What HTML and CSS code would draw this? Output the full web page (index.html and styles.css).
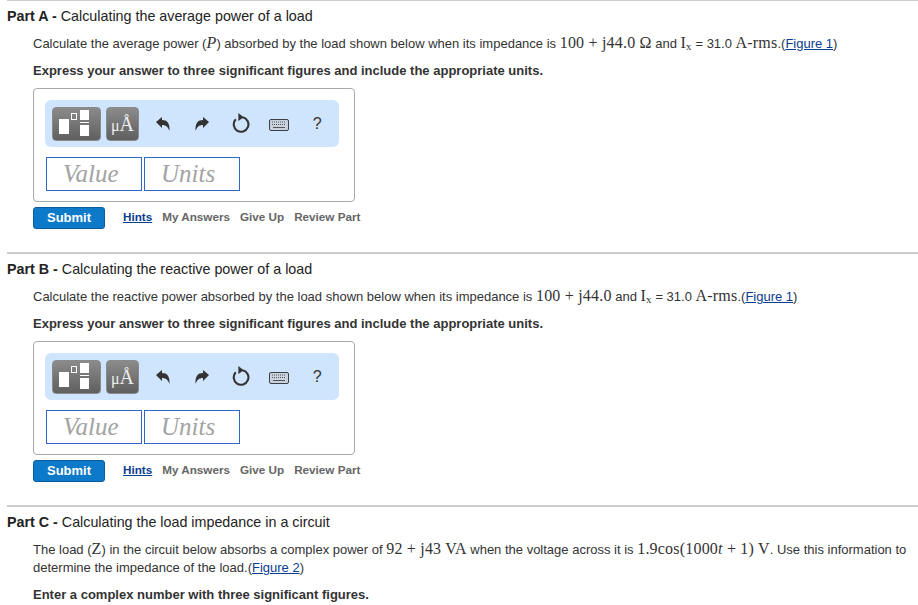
FILE: index.html
```html
<!DOCTYPE html>
<html lang="en">
<head>
    <meta charset="UTF-8">
    <title>Power in a load</title>
    <link rel="stylesheet" href="styles.css">
</head>
<body>
    <svg class="icon-defs" width="0" height="0">
        <symbol id="i-template" viewBox="0 0 49 34">
            <rect x="7" y="12" width="10" height="15" fill="#fff"/>
            <rect x="19.500" y="6.500" width="5" height="6" fill="none" stroke="#fff"/>
            <rect x="28" y="3" width="9" height="10" fill="#fff"/>
            <rect x="28" y="15" width="9" height="1" fill="#fff"/>
            <rect x="28" y="18" width="9" height="11" fill="#fff"/>
        </symbol>
        <symbol id="i-undo" viewBox="0 0 16 16">
            <path d="M1 6 L7 1 V4 C12 4 15 7 14.500 15 C13 11 11 9 7 9 V12 Z" fill="#333"/>
        </symbol>
        <symbol id="i-reset" viewBox="0 0 18 20">
            <path d="M11 4 A7 7 0 1 1 4.500 6" fill="none" stroke="#333" stroke-width="2"/>
            <path d="M7 0 L12 4 L7 7.500 Z" fill="#333"/>
        </symbol>
        <symbol id="i-keyboard" viewBox="0 0 20 12">
            <rect x="0.500" y="0.500" width="19" height="11" rx="1.500" fill="#c9d3df" stroke="#3c3f44"/>
            <path d="M3 3 H17 M3 5.500 H17" stroke="#555" stroke-dasharray="1 1"/>
            <path d="M4 8.500 H16" stroke="#555"/>
        </symbol>
    </svg>

    <section class="part">
        <h2><b>Part A -</b> Calculating the average power of a load</h2>
        <p class="question">Calculate the average power (<i class="math">P</i>) absorbed by the load shown below when its impedance is <span class="math">100 + j44.0 Ω</span> and <span class="math">I<sub>x</sub></span> = 31.0 <span class="math">A-rms</span>.(<a href="#">Figure 1</a>)</p>
        <p class="instruction">Express your answer to three significant figures and include the appropriate units.</p>
        <div class="answer-box">
            <div class="toolbar">
                <button class="tool-btn tool-template"><svg width="49" height="34"><use href="#i-template"/></svg></button>
                <button class="tool-btn tool-units"><span class="mu">μ</span>Å</button>
                <span class="tool-slot first"><svg width="16" height="16"><use href="#i-undo"/></svg></span>
                <span class="tool-slot"><svg class="flip" width="16" height="16"><use href="#i-undo"/></svg></span>
                <span class="tool-slot"><svg width="19" height="21"><use href="#i-reset"/></svg></span>
                <span class="tool-slot keyboard"><svg width="20" height="12"><use href="#i-keyboard"/></svg></span>
                <span class="tool-slot help">?</span>
            </div>
            <div class="inputs">
                <input class="answer-input" placeholder="Value">
                <input class="answer-input" placeholder="Units">
            </div>
        </div>
        <div class="actions">
            <button class="submit">Submit</button>
            <a class="hints" href="#">Hints</a>
            <a class="action" href="#">My Answers</a>
            <a class="action" href="#">Give Up</a>
            <a class="action" href="#">Review Part</a>
        </div>
    </section>

    <section class="part">
        <h2><b>Part B -</b> Calculating the reactive power of a load</h2>
        <p class="question">Calculate the reactive power absorbed by the load shown below when its impedance is <span class="math">100 + j44.0</span> and <span class="math">I<sub>x</sub></span> = 31.0 <span class="math">A-rms</span>.(<a href="#">Figure 1</a>)</p>
        <p class="instruction">Express your answer to three significant figures and include the appropriate units.</p>
        <div class="answer-box">
            <div class="toolbar">
                <button class="tool-btn tool-template"><svg width="49" height="34"><use href="#i-template"/></svg></button>
                <button class="tool-btn tool-units"><span class="mu">μ</span>Å</button>
                <span class="tool-slot first"><svg width="16" height="16"><use href="#i-undo"/></svg></span>
                <span class="tool-slot"><svg class="flip" width="16" height="16"><use href="#i-undo"/></svg></span>
                <span class="tool-slot"><svg width="19" height="21"><use href="#i-reset"/></svg></span>
                <span class="tool-slot keyboard"><svg width="20" height="12"><use href="#i-keyboard"/></svg></span>
                <span class="tool-slot help">?</span>
            </div>
            <div class="inputs">
                <input class="answer-input" placeholder="Value">
                <input class="answer-input" placeholder="Units">
            </div>
        </div>
        <div class="actions">
            <button class="submit">Submit</button>
            <a class="hints" href="#">Hints</a>
            <a class="action" href="#">My Answers</a>
            <a class="action" href="#">Give Up</a>
            <a class="action" href="#">Review Part</a>
        </div>
    </section>

    <section class="part">
        <h2><b>Part C -</b> Calculating the load impedance in a circuit</h2>
        <p class="question">The load (<span class="math">Z</span>) in the circuit below absorbs a complex power of <span class="math">92 + j43 VA</span> when the voltage across it is <span class="math">1.9cos(1000<i>t</i> + 1) V</span>. Use this information to determine the impedance of the load.(<a href="#">Figure 2</a>)</p>
        <p class="instruction">Enter a complex number with three significant figures.</p>
    </section>
</body>
</html>
```

FILE: styles.css
```css
/* Reset */
body, h2, p {
    margin: 0;
    padding: 0;
}

body {
    font-family: "Liberation Sans", Arial, sans-serif;
    font-size: 13px;
    color: #333;
    background-color: #fff;
    overflow: hidden;
}

.icon-defs {
    position: absolute;
}

/* One part of the question */
.part {
    margin-left: 7px;
    border-top: 2px solid #ccc;
    padding-top: 5px;
    padding-bottom: 23px;
}

.part:first-of-type {
    margin-top: -1px;
}

h2 {
    font-size: 14.3px;
    font-weight: normal;
    line-height: 20px;
    color: #222;
}

.question {
    margin: 9px 0 0 26px;
    line-height: 18px;
}

.instruction {
    margin: 9px 0 0 26px;
    line-height: 18px;
    font-weight: bold;
}

.math {
    font-family: "Liberation Serif", "Times New Roman", serif;
    font-size: 16px;
    line-height: 1;
    letter-spacing: 0.2px;
}

sub {
    font-size: 11px;
    line-height: 0;
    vertical-align: -2px;
}

a {
    color: #0b3d91;
}

/* Answer box */
.answer-box {
    box-sizing: border-box;
    width: 322px;
    height: 114px;
    margin: 8px 0 0 26px;
    padding: 11px;
    border: 1px solid #aaa;
    border-radius: 4px;
}

.toolbar {
    display: flex;
    align-items: center;
    box-sizing: border-box;
    width: 294px;
    height: 47px;
    padding-left: 7px;
    background-color: #cfe4fd;
    border-radius: 6px;
}

.tool-btn {
    height: 34px;
    padding: 0;
    border: 1px solid #8a8a8a;
    border-radius: 4px;
    background: linear-gradient(#8b8b8b, #5f5f5f);
}

.tool-template {
    width: 49px;
}

.tool-template svg {
    display: block;
    margin: -1px;
}

.tool-units {
    width: 33px;
    margin-left: 5px;
    font-family: "Liberation Serif", serif;
    font-size: 20px;
    line-height: 1;
    color: #eee;
}

.mu {
    font-size: 16px;
}

.tool-slot {
    display: flex;
    justify-content: center;
    width: 38.5px;
}

.tool-slot.first {
    margin-left: 5px;
}

.tool-slot.keyboard {
    padding-top: 2px;
}

.flip {
    transform: scaleX(-1);
}

.help {
    font-size: 16px;
}

.inputs {
    display: flex;
    gap: 2px;
    margin-top: 10px;
    margin-left: 1px;
}

.answer-input {
    box-sizing: border-box;
    width: 96px;
    height: 34px;
    padding: 0 0 0 16px;
    border: 1px solid #3366cc;
    border-radius: 0;
    font-family: "Liberation Serif", serif;
    font-size: 25px;
    font-style: italic;
}

.answer-input::placeholder {
    color: #a3a3a3;
    opacity: 1;
}

/* Submit row */
.actions {
    display: flex;
    align-items: flex-start;
    gap: 10px;
    margin: 5px 0 0 26px;
    font-size: 11.7px;
    font-weight: bold;
    line-height: 20px;
}

.submit {
    width: 72px;
    height: 22px;
    margin-right: 8px;
    padding: 0 0 2px;
    border: 1px solid #0a5c9e;
    border-radius: 3px;
    background-color: #0d79c9;
    color: #fff;
    font-family: inherit;
    font-size: 13px;
    font-weight: bold;
}

.action {
    color: #666;
    text-decoration: none;
}
```
